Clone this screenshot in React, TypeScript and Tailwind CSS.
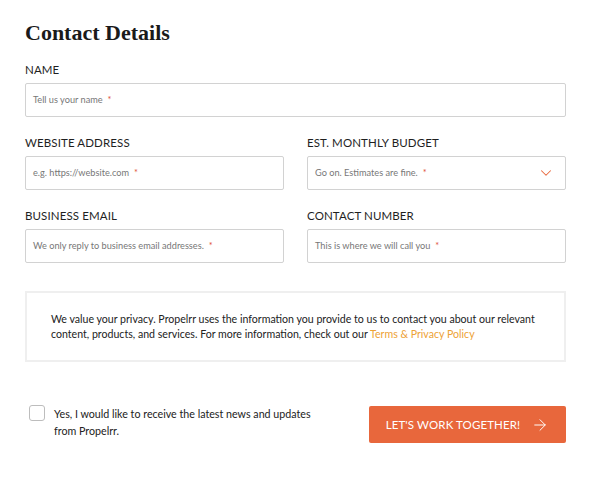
import { ChevronDown, ArrowRight } from "lucide-react";

function Field({ label, placeholder, select }: { label: string; placeholder: string; select?: boolean }) {
  return (
    <div className="flex flex-col">
      <label className="text-[11.5px] leading-[16px] text-[#1f1f1f] tracking-[0.01em] mb-[5px]">{label}</label>
      <div className="h-[34px] border border-[#d2d2d2] rounded-[2px] flex items-center justify-between px-[7px] bg-white">
        <span className="text-[9.2px] text-[#777]">
          {placeholder}
          <span className="text-[#e0523a] ml-[5px]">*</span>
        </span>
        {select && <ChevronDown size={18} strokeWidth={1.4} className="text-[#e8673c] mr-[3px]" />}
      </div>
    </div>
  );
}

export default function App() {
  return (
    <div className="w-[600px] h-[486px] bg-white pl-[25px] pr-[34px] pt-[19px]" style={{ fontFamily: "Lato, 'Open Sans', sans-serif" }}>
      <h1 className="text-[22px] leading-[28px] font-bold text-[#1a1a1a]" style={{ fontFamily: "'Liberation Serif', serif" }}>
        Contact Details
      </h1>
      <div className="mt-[15px] flex flex-col gap-[18px]">
        <Field label="NAME" placeholder="Tell us your name" />
        <div className="grid grid-cols-2 gap-x-[23px] gap-y-[18px]">
          <Field label="WEBSITE ADDRESS" placeholder="e.g. https://website.com" />
          <Field label="EST. MONTHLY BUDGET" placeholder="Go on. Estimates are fine." select />
          <Field label="BUSINESS EMAIL" placeholder="We only reply to business email addresses." />
          <Field label="CONTACT NUMBER" placeholder="This is where we will call you" />
        </div>
      </div>
      <div className="mt-[28px] h-[71px] border-2 border-[#efefef] flex items-center pl-[24px] pr-[10px]">
        <p className="text-[10.6px] leading-[15px] text-[#222]">
          We value your privacy. Propelrr uses the information you provide to us to contact you about our relevant
          <br />
          content, products, and services. For more information, check out our{" "}
          <a className="text-[#eda235]">Terms &amp; Privacy Policy</a>
        </p>
      </div>
      <div className="mt-[44px] flex items-start justify-between">
        <div className="flex items-start pl-[4px]">
          <div className="w-[16px] h-[16px] border border-[#bdbdbd] rounded-[3px] -mt-[1px] shrink-0" />
          <p className="ml-[9px] text-[10.7px] leading-[17px] text-[#222] w-[280px] -mt-[1px]">
            Yes, I would like to receive the latest news and updates <br />from Propelrr.
          </p>
        </div>
        <button className="w-[197px] h-[37px] bg-[#e8673c] rounded-[2px] text-white text-[11.5px] tracking-[0.01em] flex items-center justify-center gap-[11px]">
          LET'S WORK TOGETHER!
          <ArrowRight size={18} strokeWidth={1.3} />
        </button>
      </div>
    </div>
  );
}
